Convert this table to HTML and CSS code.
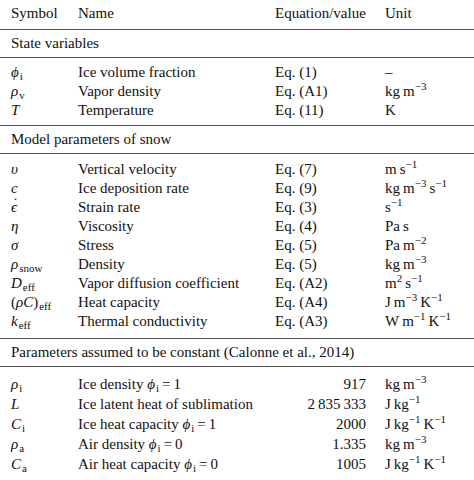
FILE: index.html
```html
<!DOCTYPE html>
<html lang="en">
<head>
<meta charset="utf-8">
<title>Model parameters</title>
<link rel="stylesheet" href="styles.css">
</head>
<body>
<table class="params">
  <colgroup>
    <col class="c-sym"><col class="c-name"><col class="c-eq"><col class="c-unit">
  </colgroup>
  <thead>
    <tr><th>Symbol</th><th>Name</th><th>Equation/value</th><th>Unit</th></tr>
  </thead>
  <tbody class="section">
    <tr><td colspan="4">State variables</td></tr>
  </tbody>
  <tbody class="group first-group">
    <tr><td><i>ϕ</i><sub>i</sub></td><td>Ice volume fraction</td><td>Eq. (1)</td><td>–</td></tr>
    <tr><td><i>ρ</i><sub>v</sub></td><td>Vapor density</td><td>Eq. (A1)</td><td>kg&thinsp;m<sup>−3</sup></td></tr>
    <tr><td><i>T</i></td><td>Temperature</td><td>Eq. (11)</td><td>K</td></tr>
  </tbody>
  <tbody class="section">
    <tr><td colspan="4">Model parameters of snow</td></tr>
  </tbody>
  <tbody class="group">
    <tr><td><i>υ</i></td><td>Vertical velocity</td><td>Eq. (7)</td><td>m&thinsp;s<sup>−1</sup></td></tr>
    <tr><td><i>c</i></td><td>Ice deposition rate</td><td>Eq. (9)</td><td>kg&thinsp;m<sup>−3</sup>&thinsp;s<sup>−1</sup></td></tr>
    <tr><td><i class="dot">ϵ</i></td><td>Strain rate</td><td>Eq. (3)</td><td>s<sup>−1</sup></td></tr>
    <tr><td><i>η</i></td><td>Viscosity</td><td>Eq. (4)</td><td>Pa&thinsp;s</td></tr>
    <tr><td><i>σ</i></td><td>Stress</td><td>Eq. (5)</td><td>Pa&thinsp;m<sup>−2</sup></td></tr>
    <tr><td><i>ρ</i><sub>snow</sub></td><td>Density</td><td>Eq. (5)</td><td>kg&thinsp;m<sup>−3</sup></td></tr>
    <tr><td><i>D</i><sub>eff</sub></td><td>Vapor diffusion coefficient</td><td>Eq. (A2)</td><td>m<sup>2</sup>&thinsp;s<sup>−1</sup></td></tr>
    <tr><td>(<i>ρC</i>)<sub>eff</sub></td><td>Heat capacity</td><td>Eq. (A4)</td><td>J&thinsp;m<sup>−3</sup>&thinsp;K<sup>−1</sup></td></tr>
    <tr><td><i>k</i><sub>eff</sub></td><td>Thermal conductivity</td><td>Eq. (A3)</td><td>W&thinsp;m<sup>−1</sup>&thinsp;K<sup>−1</sup></td></tr>
  </tbody>
  <tbody class="section">
    <tr><td colspan="4">Parameters assumed to be constant (Calonne et al., 2014)</td></tr>
  </tbody>
  <tbody class="group last">
    <tr><td><i>ρ</i><sub>i</sub></td><td>Ice density <i>ϕ</i><sub>i</sub>&thinsp;=&thinsp;1</td><td class="num">917</td><td>kg&thinsp;m<sup>−3</sup></td></tr>
    <tr><td><i>L</i></td><td>Ice latent heat of sublimation</td><td class="num">2&thinsp;835&thinsp;333</td><td>J&thinsp;kg<sup>−1</sup></td></tr>
    <tr><td><i>C</i><sub>i</sub></td><td>Ice heat capacity <i>ϕ</i><sub>i</sub>&thinsp;=&thinsp;1</td><td class="num">2000</td><td>J&thinsp;kg<sup>−1</sup>&thinsp;K<sup>−1</sup></td></tr>
    <tr><td><i>ρ</i><sub>a</sub></td><td>Air density <i>ϕ</i><sub>i</sub>&thinsp;=&thinsp;0</td><td class="num">1.335</td><td>kg&thinsp;m<sup>−3</sup></td></tr>
    <tr><td><i>C</i><sub>a</sub></td><td>Air heat capacity <i>ϕ</i><sub>i</sub>&thinsp;=&thinsp;0</td><td class="num">1005</td><td>J&thinsp;kg<sup>−1</sup>&thinsp;K<sup>−1</sup></td></tr>
  </tbody>
</table>
</body>
</html>
```

FILE: styles.css
```css
html, body {
  margin: 0;
  padding: 0;
  background: #fff;
}

body {
  font-family: "Liberation Serif", "DejaVu Serif", serif;
  font-size: 15px;
  color: #111;
}

.params {
  width: 474px;
  border-collapse: collapse;
  table-layout: fixed;
}

.c-sym { width: 78px; }
.c-name { width: 197px; }
.c-eq { width: 110px; }
.c-unit { width: 89px; }

.params th,
.params td {
  padding: 0;
  line-height: 19px;
  height: 19px;
  text-align: left;
  font-weight: normal;
  white-space: nowrap;
  vertical-align: middle;
}

.params th:first-child,
.params td:first-child {
  padding-left: 11px;
}

.params thead tr {
  border-bottom: 1px solid #555;
}

.params thead th {
  padding-top: 4px;
  padding-bottom: 6px;
}

.params .section tr {
  border-bottom: 1px solid #555;
}

.params .section td {
  padding-top: 4px;
  padding-bottom: 4px;
}

.params .group {
  border-bottom: 1px solid #555;
}

.params .group tr:first-child td {
  padding-top: 6px;
}

.params .group tr:last-child td {
  padding-bottom: 7px;
}

.params .first-group tr:first-child td {
  padding-top: 5px;
}

.params .first-group tr:last-child td {
  padding-bottom: 5px;
}

.params .group.last {
  border-bottom: none;
}

.params .group.last td {
  height: 20px;
  line-height: 20px;
}

.params .group.last tr:first-child td {
  padding-top: 7px;
}

.params .group.last tr:last-child td {
  padding-bottom: 0;
}

.params td.num {
  text-align: right;
  padding-right: 19px;
}

i {
  font-style: italic;
}

.dot {
  position: relative;
}

.dot::after {
  content: "\02D9";
  position: absolute;
  left: 2px;
  top: -5px;
  font-style: normal;
}

sub, sup {
  font-size: 11px;
  line-height: 0;
  position: relative;
  vertical-align: baseline;
}

sub {
  top: 3px;
  margin-left: 1px;
}

sup {
  top: -6px;
}
```
